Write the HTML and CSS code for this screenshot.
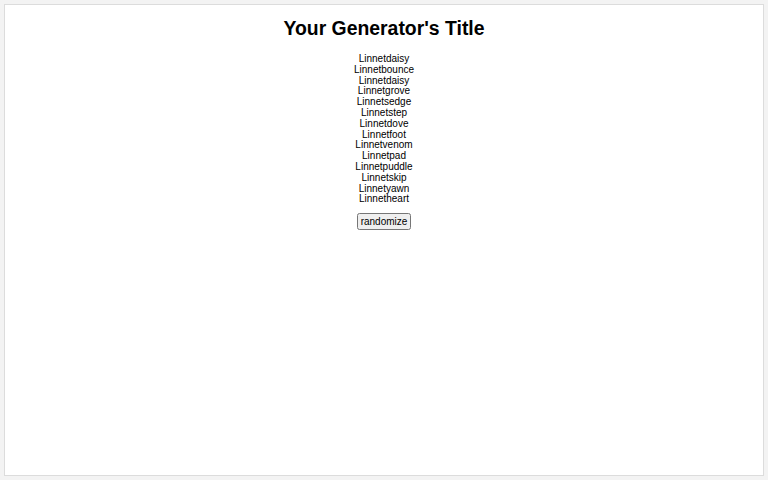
FILE: index.html
```html
<!DOCTYPE html>
<html>
<head>
<meta charset="utf-8">
<link rel="stylesheet" href="styles.css">
</head>
<body>
<div class="panel">
  <h1 class="title">Your Generator's Title</h1>
  <div class="names">
    <div>Linnetdaisy</div>
    <div>Linnetbounce</div>
    <div>Linnetdaisy</div>
    <div>Linnetgrove</div>
    <div>Linnetsedge</div>
    <div>Linnetstep</div>
    <div>Linnetdove</div>
    <div>Linnetfoot</div>
    <div>Linnetvenom</div>
    <div>Linnetpad</div>
    <div>Linnetpuddle</div>
    <div>Linnetskip</div>
    <div>Linnetyawn</div>
    <div>Linnetheart</div>
  </div>
  <button class="btn">randomize</button>
</div>
</body>
</html>
```
FILE: styles.css
```css
html, body {
  margin: 0;
  padding: 0;
}
body {
  background: #f3f3f3;
  padding: 4px 4px 4px 4px;
  font-family: "Liberation Sans", Arial, sans-serif;
  box-sizing: border-box;
  height: 480px;
}
.panel {
  background: #fff;
  border: 1px solid #dcdcdc;
  height: 472px;
  box-sizing: border-box;
  text-align: center;
  padding-top: 12px;
}
.title {
  font-size: 19.4px;
  font-weight: bold;
  margin: 0 0 15px 0;
  line-height: 22px;
  color: #000;
}
.names {
  font-size: 10px;
  line-height: 10.8px;
  color: #000;
}
.btn {
  margin-top: 8px;
  font-family: "Liberation Sans", Arial, sans-serif;
  font-size: 10px;
  line-height: 11px;
  padding: 1px 2px;
}
```
